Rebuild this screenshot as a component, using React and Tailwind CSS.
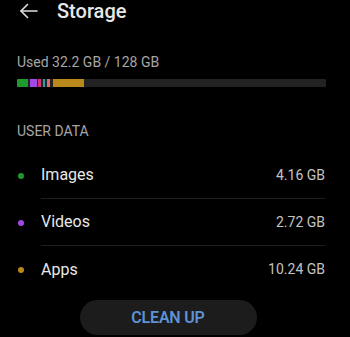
import React from 'react';

const SEGMENTS = [
  { w: 11, color: 'bg-[#1f9a2e]', gap: 'mr-[2px]' },
  { w: 7, color: 'bg-[#a347e6]', gap: 'mr-[1px]' },
  { w: 3, color: 'bg-[#d0336b]', gap: 'mr-[2px]' },
  { w: 2, color: 'bg-[#2b9aa8]', gap: 'mr-[2px]' },
  { w: 3, color: 'bg-[#e06a6a]', gap: 'mr-[3px]' },
  { w: 31, color: 'bg-[#b8891a]', gap: '' },
];

const ROWS = [
  { name: 'Images', size: '4.16 GB', dot: 'bg-[#1f9a2e]' },
  { name: 'Videos', size: '2.72 GB', dot: 'bg-[#a347e6]' },
  { name: 'Apps', size: '10.24 GB', dot: 'bg-[#b8891a]' },
];

export default function App() {
  return (
    <div
      className="w-[350px] h-[337px] bg-black text-[#e8e8e8] overflow-hidden"
      style={{ fontFamily: 'Roboto, "Noto Sans", sans-serif' }}
    >
      {/* Header */}
      <div className="flex items-center h-[22px] pl-[19px]">
        <svg width="19" height="16" viewBox="0 0 19 16" fill="none" stroke="#e0e0e0" strokeWidth="1.6" strokeLinecap="round" strokeLinejoin="round">
          <path d="M18 8H2" />
          <path d="M8.5 1.5L2 8l6.5 6.5" />
        </svg>
        <span className="ml-[19px] text-[20px] font-medium leading-none">Storage</span>
      </div>

      {/* Usage */}
      <div className="px-[17px] pt-[32px]">
        <p className="text-[14px] leading-[16px] text-[#a6a6a6]">Used 32.2 GB / 128 GB</p>
        <div className="mt-[9px] h-[8px] w-[309px] bg-[#222222] flex rounded-[1px] overflow-hidden">
          {SEGMENTS.map((s, i) => (
            <div key={i} className={`h-full ${s.color} ${s.gap}`} style={{ width: s.w }} />
          ))}
        </div>
      </div>

      {/* User data */}
      <div className="px-[17px] pt-[36px]">
        <p className="text-[14px] leading-[16px] text-[#a6a6a6]">USER DATA</p>
        <div className="mt-[13px] pr-[8px]">
          {ROWS.map((r, i) => (
            <div key={r.name} className="flex items-center h-[47px]">
              <span className={`w-[6px] h-[6px] rounded-full ml-[1px] ${r.dot}`} />
              <div
                className={`flex-1 flex items-center justify-between h-full ml-[17px] ${
                  i < ROWS.length - 1 ? 'border-b border-[#1e1e1e]' : ''
                }`}
              >
                <span className="text-[16px]">{r.name}</span>
                <span className="text-[14px] text-[#c4c4c4]">{r.size}</span>
              </div>
            </div>
          ))}
        </div>
      </div>

      {/* Button */}
      <div className="flex justify-center mt-[7px] pr-[14px]">
        <button className="w-[177px] h-[35px] rounded-full bg-[#1c1c1c] text-[#5d93d6] text-[16px] font-semibold tracking-[-0.2px]">
          CLEAN UP
        </button>
      </div>
    </div>
  );
}
